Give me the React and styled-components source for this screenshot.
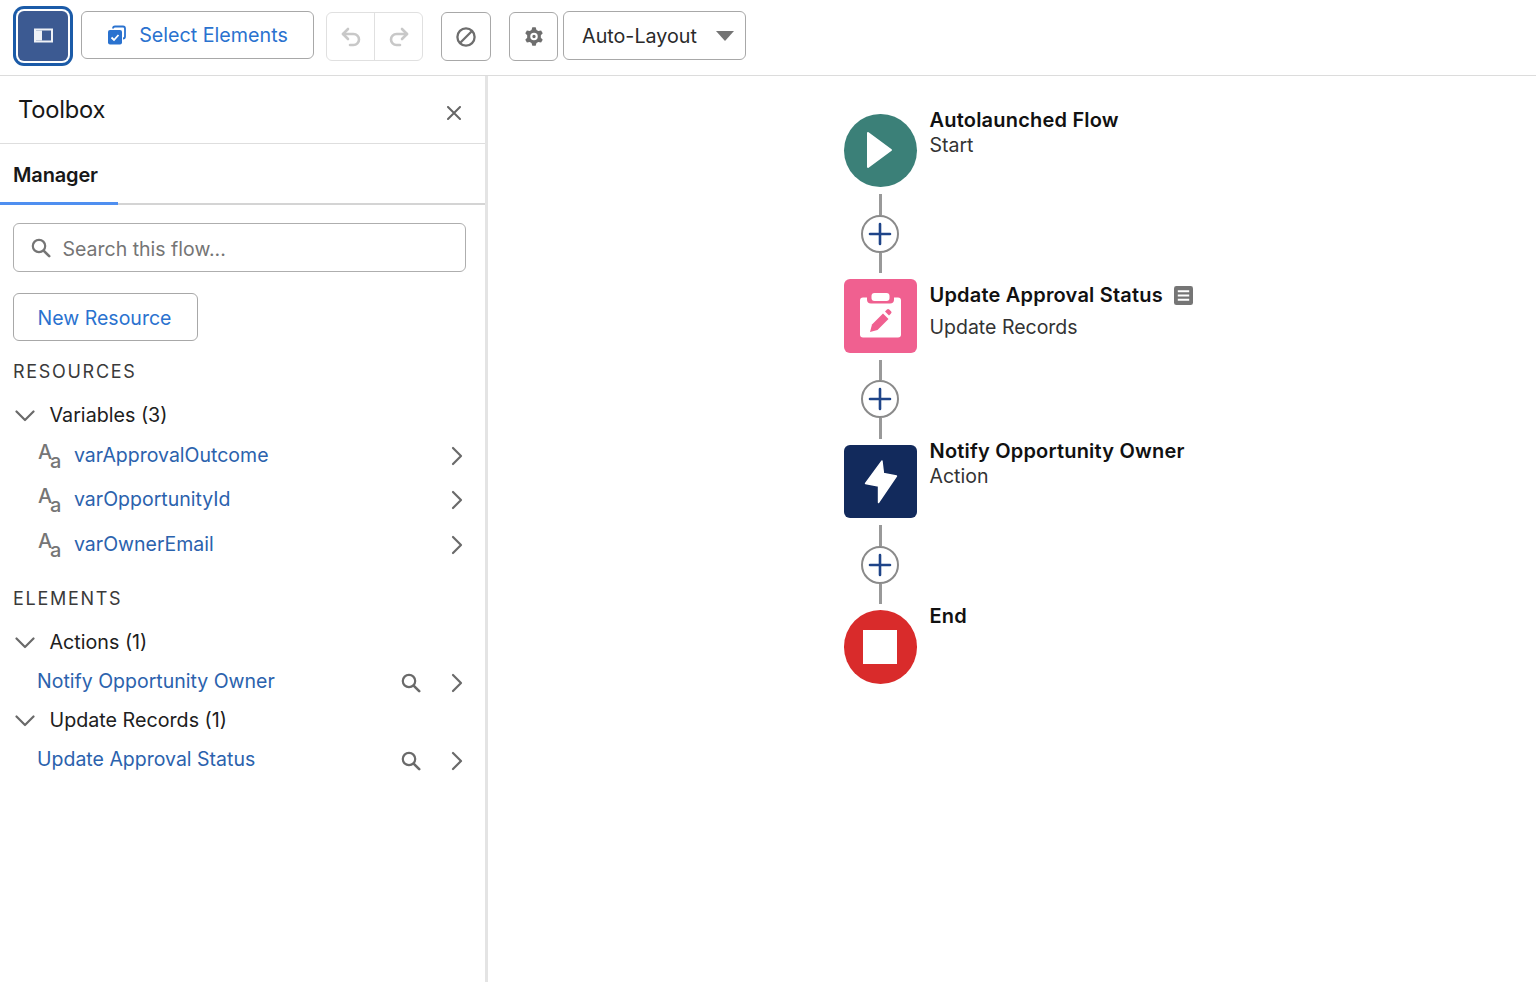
import React from "react";
import styled, { createGlobalStyle } from "styled-components";
import { Redo2, Undo2 } from "lucide-react";

const GlobalStyle = createGlobalStyle`
  html, body { margin: 0; padding: 0; background: #fff; }
  body { font-family: Inter, "Liberation Sans", sans-serif; color: #181818; overflow: hidden; }
  * { box-sizing: border-box; }
`;

const Page = styled.div`
  width: 1536px;
  height: 982px;
  display: flex;
  flex-direction: column;
`;

const Toolbar = styled.div`
  height: 76px;
  flex: none;
  border-bottom: 1px solid #dcdcdc;
  display: flex;
  align-items: flex-start;
  padding: 11px 0 0 18px;
`;

const ToolButton = styled.button`
  height: ${(p) => p.$h || 49}px;
  width: ${(p) => p.$w}px;
  margin-left: ${(p) => p.$ml || 0}px;
  margin-top: ${(p) => p.$mt || 0}px;
  padding: 0 0 0 ${(p) => p.$pl || 0}px;
  background: #fff;
  border: 1.5px solid #a8a8a8;
  border-radius: 6px;
  display: flex;
  align-items: center;
  justify-content: center;
  font-family: inherit;
  font-size: 19.7px;
  color: #2a2a2a;
`;

const ActiveButton = styled.button`
  width: 50px;
  height: 50px;
  padding: 0;
  border: none;
  border-radius: 6px;
  background: #3c5a92;
  box-shadow: 0 0 0 2px #fff, 0 0 0 5px #1b5ba8;
  display: flex;
  align-items: center;
  justify-content: center;
`;

const SelectLabel = styled.span`
  color: #2a72cf;
  margin-left: 12px;
`;

const UndoGroup = styled.div`
  display: flex;
  width: 97px;
  height: 49px;
  margin-left: 12px;
  margin-top: 1px;
  border: 1.5px solid #e0e0e0;
  border-radius: 6px;
`;

const UndoCell = styled.div`
  flex: 1;
  display: flex;
  align-items: center;
  justify-content: center;
  color: #c8c8c8;
  & + & { border-left: 1.5px solid #e0e0e0; }
`;

const Caret = styled.span`
  width: 0;
  height: 0;
  margin-left: 19px;
  border-left: 9px solid transparent;
  border-right: 9px solid transparent;
  border-top: 10px solid #747474;
`;

const Body = styled.div`
  flex: 1;
  display: flex;
  min-height: 0;
`;

const Sidebar = styled.aside`
  width: 488px;
  flex: none;
  border-right: 3px solid #e4e4e4;
  display: flex;
  flex-direction: column;
`;

const SideHeader = styled.div`
  height: 68px;
  flex: none;
  padding: 0 24px 0 18px;
  border-bottom: 1px solid #dedede;
  display: flex;
  align-items: center;
  justify-content: space-between;
`;

const SideTitle = styled.h2`
  margin: 0;
  font-size: 23.7px;
  line-height: 32px;
  font-weight: 400;
  letter-spacing: -0.2px;
  color: #181818;
`;

const CloseGlyph = styled.svg`
  margin-top: 6px;
`;

const Tabs = styled.div`
  height: 61px;
  flex: none;
  border-bottom: 2px solid #d4d4d4;
  display: flex;
`;

const Tab = styled.div`
  width: 118px;
  height: 61px;
  padding: 19px 0 0 13px;
  font-size: 20px;
  line-height: 24px;
  font-weight: 600;
  letter-spacing: -0.15px;
  color: #181818;
  border-bottom: 3px solid #4f8ff0;
`;

const SideContent = styled.div`
  padding: 18px 19px 0 13px;
`;

const SearchBox = styled.div`
  height: 49px;
  border: 1.5px solid #aeaeae;
  border-radius: 6px;
  display: flex;
  align-items: center;
  padding-left: 16.5px;
  color: #757575;
  font-size: 19.5px;
`;

const SearchText = styled.span`
  margin-left: 12px;
  margin-top: 2px;
`;

const NewButton = styled.button`
  display: block;
  width: 185px;
  height: 48px;
  margin-top: 21px;
  padding: 2px 2px 0 0;
  background: #fff;
  border: 1.5px solid #a8a8a8;
  border-radius: 6px;
  font-family: inherit;
  font-size: 19.5px;
  color: #2a72cf;
`;

const SectionLabel = styled.div`
  height: 22px;
  margin-top: ${(p) => p.$mt}px;
  font-size: 18px;
  line-height: 22px;
  letter-spacing: 1.7px;
  color: #3a3a3a;
`;

const Group = styled.div`
  height: 39px;
  margin-top: ${(p) => p.$mt || 0}px;
  display: flex;
  align-items: center;
  font-size: 19.7px;
  color: #202020;
`;

const GroupChevron = styled.svg`
  margin: 2px 14.5px 0 2px;
  flex: none;
`;

const Row = styled.div`
  height: ${(p) => p.$h}px;
  display: flex;
  align-items: center;
  padding-left: 24px;
  font-size: 19.5px;
  color: #2b62ad;
`;

const RowText = styled.span`
  flex: 1;
  margin-top: ${(p) => p.$mt}px;
`;

const TypeIcon = styled.span`
  width: 25px;
  height: 28px;
  margin: -1px 11px 0 1px;
  flex: none;
  position: relative;
  color: #757575;
  font-size: 20px;
  font-weight: 500;
  line-height: 20px;
`;

const TypeSmall = styled.span`
  position: absolute;
  left: 12px;
  top: 9px;
`;

const RowSearch = styled.svg`
  margin-right: 30px;
  margin-top: 4px;
  flex: none;
`;

const RowChevron = styled.svg`
  margin-right: 3px;
  margin-top: ${(p) => p.$mt}px;
  flex: none;
`;

const Canvas = styled.main`
  flex: 1;
  padding: 37.5px 0 0 355.5px;
`;

const Step = styled.div`
  display: flex;
  align-items: flex-start;
  gap: 13px;
`;

const NodeIcon = styled.div`
  width: 73px;
  height: 73.5px;
  flex: none;
  border-radius: ${(p) => (p.$round ? "50%" : "6px")};
  background: ${(p) => p.$bg};
  display: flex;
  align-items: center;
  justify-content: center;
`;

const NodeText = styled.div`
  margin-top: ${(p) => p.$mt}px;
`;

const NodeTitle = styled.div`
  display: flex;
  align-items: center;
  font-size: 20px;
  line-height: 24px;
  font-weight: 600;
  letter-spacing: 0.2px;
  color: #111;
`;

const NodeSub = styled.div`
  margin-top: ${(p) => p.$mt || 1}px;
  font-size: 19.5px;
  line-height: 24px;
  color: #333;
`;

const NoteIcon = styled.svg`
  margin-left: 11px;
`;

const Connector = styled.div`
  width: 73px;
  height: 92px;
  padding: 7px 0 6px;
  display: flex;
  flex-direction: column;
  align-items: center;
`;

const Line = styled.div`
  width: 3px;
  flex: 1;
  background: #999;
`;

const PlusButton = styled.div`
  width: 38px;
  height: 38px;
  flex: none;
  border: 2.5px solid #8a8a8a;
  border-radius: 50%;
  background: #fff;
  display: flex;
  align-items: center;
  justify-content: center;
`;

const AddStep = () => (
  <Connector>
    <Line />
    <PlusButton>
      <svg width="24" height="24" viewBox="0 0 24 24">
        <path d="M12 2v20M2 12h20" stroke="#1e4488" strokeWidth="2.6" strokeLinecap="round" />
      </svg>
    </PlusButton>
    <Line />
  </Connector>
);

const Gear = () => (
  <svg width="20" height="21" viewBox="0 0 24 24">
    <path
      fillRule="evenodd"
      fill="#6e6e6e"
      d="M10 1h4l1 3.2 2.2 1.3 3.3-.8 2 3.5-2.3 2.4v2.8l2.3 2.4-2 3.5-3.3-.8-2.2 1.3L14 23h-4l-1-3.2-2.2-1.3-3.3.8-2-3.5 2.3-2.4v-2.8L1.5 8.2l2-3.5 3.3.8L9 4.2zM12 7.5a4.5 4.5 0 1 0 0 9 4.5 4.5 0 0 0 0-9zM12 10a2 2 0 1 1 0 4 2 2 0 0 1 0-4z"
    />
  </svg>
);

const Magnifier = ({ as, color = "#6a6a6a" }) => {
  const Wrap = as || "svg";
  return (
    <Wrap width="20" height="20" viewBox="0 0 20 20">
      <circle cx="8" cy="8" r="6.2" fill="none" stroke={color} strokeWidth="2.2" />
      <path d="M12.6 12.6l5.6 5.6" stroke={color} strokeWidth="2.6" strokeLinecap="round" />
    </Wrap>
  );
};

const ChevronR = ({ mt }) => (
  <RowChevron $mt={mt} width="12" height="20" viewBox="0 0 12 20">
    <path d="M2 2l8 8-8 8" fill="none" stroke="#6a6a6a" strokeWidth="2.2" strokeLinecap="round" strokeLinejoin="round" />
  </RowChevron>
);

const ChevronD = () => (
  <GroupChevron width="20" height="12" viewBox="0 0 20 12">
    <path d="M1.5 1.5L10 10l8.5-8.5" fill="none" stroke="#6a6a6a" strokeWidth="2.2" strokeLinecap="round" strokeLinejoin="round" />
  </GroupChevron>
);

const variables = ["varApprovalOutcome", "varOpportunityId", "varOwnerEmail"];

export default function App() {
  return (
    <Page>
      <GlobalStyle />
      <Toolbar>
        <ActiveButton>
          <svg width="20" height="16" viewBox="0 0 20 16">
            <rect x="2" y="1.5" width="17" height="12" fill="none" stroke="#eef1f6" strokeWidth="2" />
            <rect x="3" y="2.5" width="6" height="10" fill="#eef1f6" />
          </svg>
        </ActiveButton>
        <ToolButton $w={233} $h={48} $ml={13}>
          <svg width="20" height="20" viewBox="0 0 20 20">
            <path d="M6 3.5Q6 1.5 8 1.5h8q2 0 2 2v8q0 2-2 2" fill="none" stroke="#2a72cf" strokeWidth="1.8" />
            <rect x="1" y="5" width="14" height="14.5" rx="2" fill="#2a72cf" />
            <path d="M4.5 12.5l2.5 2.5 4.5-5" fill="none" stroke="#fff" strokeWidth="1.8" />
          </svg>
          <SelectLabel>Select Elements</SelectLabel>
        </ToolButton>
        <UndoGroup>
          <UndoCell><Undo2 size={24} strokeWidth={2.6} /></UndoCell>
          <UndoCell><Redo2 size={24} strokeWidth={2.6} /></UndoCell>
        </UndoGroup>
        <ToolButton $w={50} $ml={18} $mt={1}>
          <svg width="22" height="22" viewBox="0 0 22 22">
            <circle cx="11" cy="11" r="8.6" fill="none" stroke="#6e6e6e" strokeWidth="2.3" />
            <path d="M5 17L17 5" stroke="#6e6e6e" strokeWidth="2.3" />
          </svg>
        </ToolButton>
        <ToolButton $w={49} $ml={18} $mt={1}>
          <Gear />
        </ToolButton>
        <ToolButton $w={183} $ml={5} $pl={7}>
          Auto-Layout
          <Caret />
        </ToolButton>
      </Toolbar>
      <Body>
        <Sidebar>
          <SideHeader>
            <SideTitle>Toolbox</SideTitle>
            <CloseGlyph width="14" height="14" viewBox="0 0 14 14">
              <path d="M1 1l12 12M13 1L1 13" stroke="#666" strokeWidth="2" strokeLinecap="round" />
            </CloseGlyph>
          </SideHeader>
          <Tabs>
            <Tab>Manager</Tab>
          </Tabs>
          <SideContent>
            <SearchBox>
              <Magnifier color="#757575" />
              <SearchText>Search this flow...</SearchText>
            </SearchBox>
            <NewButton>New Resource</NewButton>
            <SectionLabel $mt={20}>RESOURCES</SectionLabel>
            <Group $mt={12}>
              <ChevronD />
              Variables (3)
            </Group>
            {variables.map((name) => (
              <Row key={name} $h={44.5}>
                <TypeIcon>A<TypeSmall>a</TypeSmall></TypeIcon>
                <RowText $mt={-3.5}>{name}</RowText>
                <ChevronR mt={-1} />
              </Row>
            ))}
            <SectionLabel $mt={20.5}>ELEMENTS</SectionLabel>
            <Group $mt={12}>
              <ChevronD />
              Actions (1)
            </Group>
            <Row $h={39.5}>
              <RowText $mt={0}>Notify Opportunity Owner</RowText>
              <Magnifier as={RowSearch} />
              <ChevronR mt={4} />
            </Row>
            <Group>
              <ChevronD />
              Update Records (1)
            </Group>
            <Row $h={39.5}>
              <RowText $mt={0}>Update Approval Status</RowText>
              <Magnifier as={RowSearch} />
              <ChevronR mt={4} />
            </Row>
          </SideContent>
        </Sidebar>
        <Canvas>
          <Step>
            <NodeIcon $round $bg="#3b8078">
              <svg width="30" height="40" viewBox="0 0 30 40">
                <path d="M3 3l23 17L3 37z" fill="#fff" stroke="#fff" strokeWidth="2" strokeLinejoin="round" />
              </svg>
            </NodeIcon>
            <NodeText $mt={-5.5}>
              <NodeTitle>Autolaunched Flow</NodeTitle>
              <NodeSub>Start</NodeSub>
            </NodeText>
          </Step>
          <AddStep />
          <Step>
            <NodeIcon $bg="#f06090">
              <svg width="73" height="73" viewBox="0 0 73 73">
                <rect x="16" y="18.5" width="41" height="40" rx="3" fill="#fff" />
                <rect x="23" y="10" width="27" height="14.5" rx="4" fill="#f06090" />
                <rect x="27.5" y="14" width="18" height="8" rx="3" fill="#fff" />
                <path d="M26 53l2-7.5 11-11 5.5 5.5-11 11z" fill="#f06090" />
                <path d="M41 32.5l2-2a1.5 1.5 0 0 1 2.2 0l1.8 1.8a1.5 1.5 0 0 1 0 2.2l-2 2z" fill="#f06090" />
              </svg>
            </NodeIcon>
            <NodeText $mt={4}>
              <NodeTitle>
                Update Approval Status
                <NoteIcon width="19" height="19" viewBox="0 0 20 20">
                  <rect width="20" height="20" rx="2.5" fill="#757575" />
                  <path d="M4 5.5h12M4 10h12M4 14.5h12" stroke="#fff" strokeWidth="2" />
                </NoteIcon>
              </NodeTitle>
              <NodeSub $mt={8}>Update Records</NodeSub>
            </NodeText>
          </Step>
          <AddStep />
          <Step>
            <NodeIcon $bg="#122a5c">
              <svg width="73" height="73" viewBox="0 0 73 73">
                <path
                  d="M38 16L21.5 38.5 34.5 41 34.5 57.5 52.5 31 39.5 28.5z"
                  fill="#fff"
                  stroke="#fff"
                  strokeWidth="1.4"
                  strokeLinejoin="round"
                />
              </svg>
            </NodeIcon>
            <NodeText $mt={-6}>
              <NodeTitle>Notify Opportunity Owner</NodeTitle>
              <NodeSub>Action</NodeSub>
            </NodeText>
          </Step>
          <AddStep />
          <Step>
            <NodeIcon $round $bg="#d92b2b">
              <svg width="34" height="34" viewBox="0 0 34 34">
                <rect width="34" height="34" fill="#fff" />
              </svg>
            </NodeIcon>
            <NodeText $mt={-6}>
              <NodeTitle>End</NodeTitle>
            </NodeText>
          </Step>
        </Canvas>
      </Body>
    </Page>
  );
}
